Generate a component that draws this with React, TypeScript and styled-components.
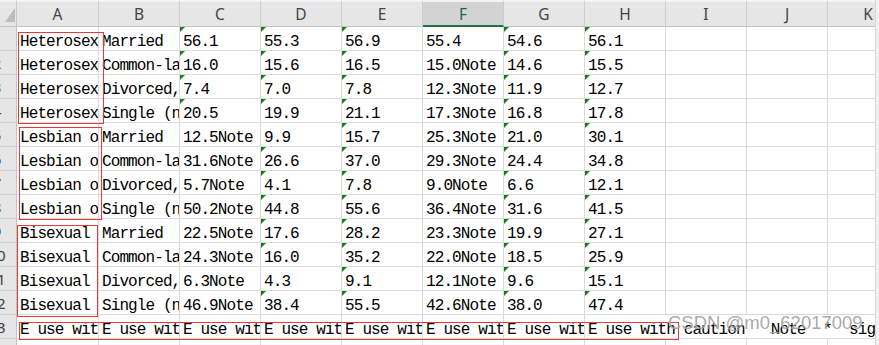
import React from "react";
import styled, { createGlobalStyle, css } from "styled-components";

const GlobalStyle = createGlobalStyle`
  html, body {
    margin: 0;
    padding: 0;
    background: #ffffff;
  }
  body {
    width: 879px;
    height: 345px;
    overflow: hidden;
  }
`;

const COLUMNS = ["A", "B", "C", "D", "E", "F", "G", "H", "I", "J", "K"];
const SELECTED_COL = "F";

type SheetRow = {
  group: string;
  status: string;
  values: string[];
  flags: number[];
};

const ROWS: SheetRow[] = [
  { group: "Heterosexual", status: "Married", values: ["56.1", "55.3", "56.9", "55.4", "54.6", "56.1"], flags: [1, 1, 1, 0, 1, 1] },
  { group: "Heterosexual", status: "Common-law", values: ["16.0", "15.6", "16.5", "15.0Note", "14.6", "15.5"], flags: [1, 1, 1, 0, 1, 1] },
  { group: "Heterosexual", status: "Divorced, separated or widowed", values: ["7.4", "7.0", "7.8", "12.3Note", "11.9", "12.7"], flags: [1, 1, 1, 0, 1, 1] },
  { group: "Heterosexual", status: "Single (never married)", values: ["20.5", "19.9", "21.1", "17.3Note", "16.8", "17.8"], flags: [1, 1, 1, 0, 1, 1] },
  { group: "Lesbian or gay", status: "Married", values: ["12.5Note", "9.9", "15.7", "25.3Note", "21.0", "30.1"], flags: [0, 0, 1, 0, 1, 1] },
  { group: "Lesbian or gay", status: "Common-law", values: ["31.6Note", "26.6", "37.0", "29.3Note", "24.4", "34.8"], flags: [0, 1, 1, 0, 1, 0] },
  { group: "Lesbian or gay", status: "Divorced, separated or widowed", values: ["5.7Note", "4.1", "7.8", "9.0Note", "6.6", "12.1"], flags: [0, 1, 1, 0, 1, 1] },
  { group: "Lesbian or gay", status: "Single (never married)", values: ["50.2Note", "44.8", "55.6", "36.4Note", "31.6", "41.5"], flags: [0, 1, 1, 0, 1, 1] },
  { group: "Bisexual", status: "Married", values: ["22.5Note", "17.6", "28.2", "23.3Note", "19.9", "27.1"], flags: [0, 1, 1, 0, 1, 1] },
  { group: "Bisexual", status: "Common-law", values: ["24.3Note", "16.0", "35.2", "22.0Note", "18.5", "25.9"], flags: [0, 1, 1, 0, 1, 1] },
  { group: "Bisexual", status: "Divorced, separated or widowed", values: ["6.3Note", "4.3", "9.1", "12.1Note", "9.6", "15.1"], flags: [0, 0, 1, 0, 1, 1] },
  { group: "Bisexual", status: "Single (never married)", values: ["46.9Note", "38.4", "55.5", "42.6Note", "38.0", "47.4"], flags: [0, 1, 1, 0, 1, 1] },
];

const CAUTION = "E use with caution   Note  *  significantly different";

const Page = styled.div`
  position: relative;
  display: flex;
  width: 879px;
  height: 345px;
  overflow: hidden;
  background: #ffffff;
`;

const Sheet = styled.div`
  display: grid;
  grid-template-columns: 17px 82px repeat(10, 81px);
  grid-template-rows: 27px;
  grid-auto-rows: 24px;
  width: 875px;
  flex: none;
  overflow: hidden;
`;

const Edge = styled.div`
  width: 4px;
  flex: none;
  background: #f1f1f1;
  border-left: 1px solid #d6d6d6;
`;

const Corner = styled.div`
  box-sizing: border-box;
  background: #e6e6e6;
  border-top: 2px solid #f4f4f4;
  border-right: 1px solid #c8c8c8;
  border-bottom: 1px solid #c4c4c4;
  position: relative;
`;

const ColHead = styled.div<{ $active?: boolean }>`
  box-sizing: border-box;
  display: flex;
  align-items: center;
  justify-content: center;
  background: #e6e6e6;
  border-top: 2px solid #f4f4f4;
  border-right: 1px solid #cdcdcd;
  border-bottom: 1px solid #c4c4c4;
  font-family: "Noto Sans", "Liberation Sans", sans-serif;
  font-size: 15.5px;
  color: #444444;
  ${({ $active }) =>
    $active &&
    css`
      background: #d3d3d3;
      color: #1e6b41;
      border-bottom: 2px solid #217346;
    `}
`;

const RowHead = styled.div`
  box-sizing: border-box;
  display: flex;
  align-items: center;
  overflow: hidden;
  background: #e6e6e6;
  border-right: 1px solid #c4c4c4;
  border-bottom: 1px solid #d2d2d2;
`;

const RowNum = styled.span`
  flex: none;
  width: 30px;
  margin-left: -18px;
  text-align: center;
  font-family: "Noto Sans", "Liberation Sans", sans-serif;
  font-size: 15px;
  color: #3b3f4a;
`;

const Cell = styled.div<{ $flag?: boolean; $span?: number }>`
  position: relative;
  box-sizing: border-box;
  display: flex;
  align-items: flex-end;
  padding: 0 0 0 3px;
  overflow: hidden;
  white-space: pre;
  border-right: 1px solid #dadada;
  border-bottom: 1px solid #dadada;
  font-family: "Liberation Mono", "Courier New", monospace;
  font-size: 16px;
  letter-spacing: -0.9px;
  line-height: 16px;
  color: #000000;
  ${({ $span }) =>
    $span &&
    css`
      grid-column: span ${$span};
    `}
  ${({ $flag }) =>
    $flag &&
    css`
      &::before {
        content: "";
        position: absolute;
        left: 0;
        top: 0;
        border-top: 5px solid #1a7f1a;
        border-right: 5px solid transparent;
      }
    `}
`;

const RedBox = styled.div<{ $x: number; $y: number; $w: number; $h: number }>`
  position: absolute;
  left: ${({ $x }) => $x}px;
  top: ${({ $y }) => $y}px;
  width: ${({ $w }) => $w}px;
  height: ${({ $h }) => $h}px;
  box-sizing: border-box;
  border: 1px solid #e33b3b;
  pointer-events: none;
`;

const Watermark = styled.div`
  position: absolute;
  left: 668px;
  top: 312px;
  font-family: "Liberation Sans", Arial, sans-serif;
  font-size: 18.5px;
  color: rgba(110, 110, 110, 0.6);
  text-shadow: 0 0 1px rgba(255, 255, 255, 0.8);
  white-space: nowrap;
  pointer-events: none;
`;

const CornerMark = () => (
  <svg width="17" height="25" viewBox="0 0 17 25" style={{ position: "absolute", left: 0, top: 0 }}>
    <polygon points="5,20 15,20 15,6" fill="#bdbdbd" />
  </svg>
);

const blankCells = (row: number, from: number, to: number) =>
  COLUMNS.slice(from, to).map((c) => <Cell key={`${c}${row}`} />);

export default function App() {
  return (
    <>
      <GlobalStyle />
      <Page>
        <Sheet>
          <Corner>
            <CornerMark />
          </Corner>
          {COLUMNS.map((c) => (
            <ColHead key={c} $active={c === SELECTED_COL}>
              {c}
            </ColHead>
          ))}

          {ROWS.map((r, i) => (
            <React.Fragment key={i}>
              <RowHead>
                <RowNum>{i + 1}</RowNum>
              </RowHead>
              <Cell>{r.group}</Cell>
              <Cell>{r.status}</Cell>
              {r.values.map((v, j) => (
                <Cell key={j} $flag={r.flags[j] === 1}>
                  {v}
                </Cell>
              ))}
              {blankCells(i + 1, 8, 11)}
            </React.Fragment>
          ))}

          <RowHead>
            <RowNum>13</RowNum>
          </RowHead>
          {COLUMNS.slice(0, 7).map((c) => (
            <Cell key={`${c}13`}>{CAUTION}</Cell>
          ))}
          <Cell $span={4}>{CAUTION}</Cell>

          <RowHead>
            <RowNum>14</RowNum>
          </RowHead>
          {blankCells(14, 0, 11)}
        </Sheet>
        <Edge />

        <RedBox $x={18} $y={32} $w={86} $h={92} />
        <RedBox $x={19} $y={127} $w={83} $h={93} />
        <RedBox $x={17} $y={225} $w={81} $h={92} />
        <RedBox $x={19} $y={322} $w={660} $h={18} />

        <Watermark>CSDN @m0_62017009</Watermark>
      </Page>
    </>
  );
}
